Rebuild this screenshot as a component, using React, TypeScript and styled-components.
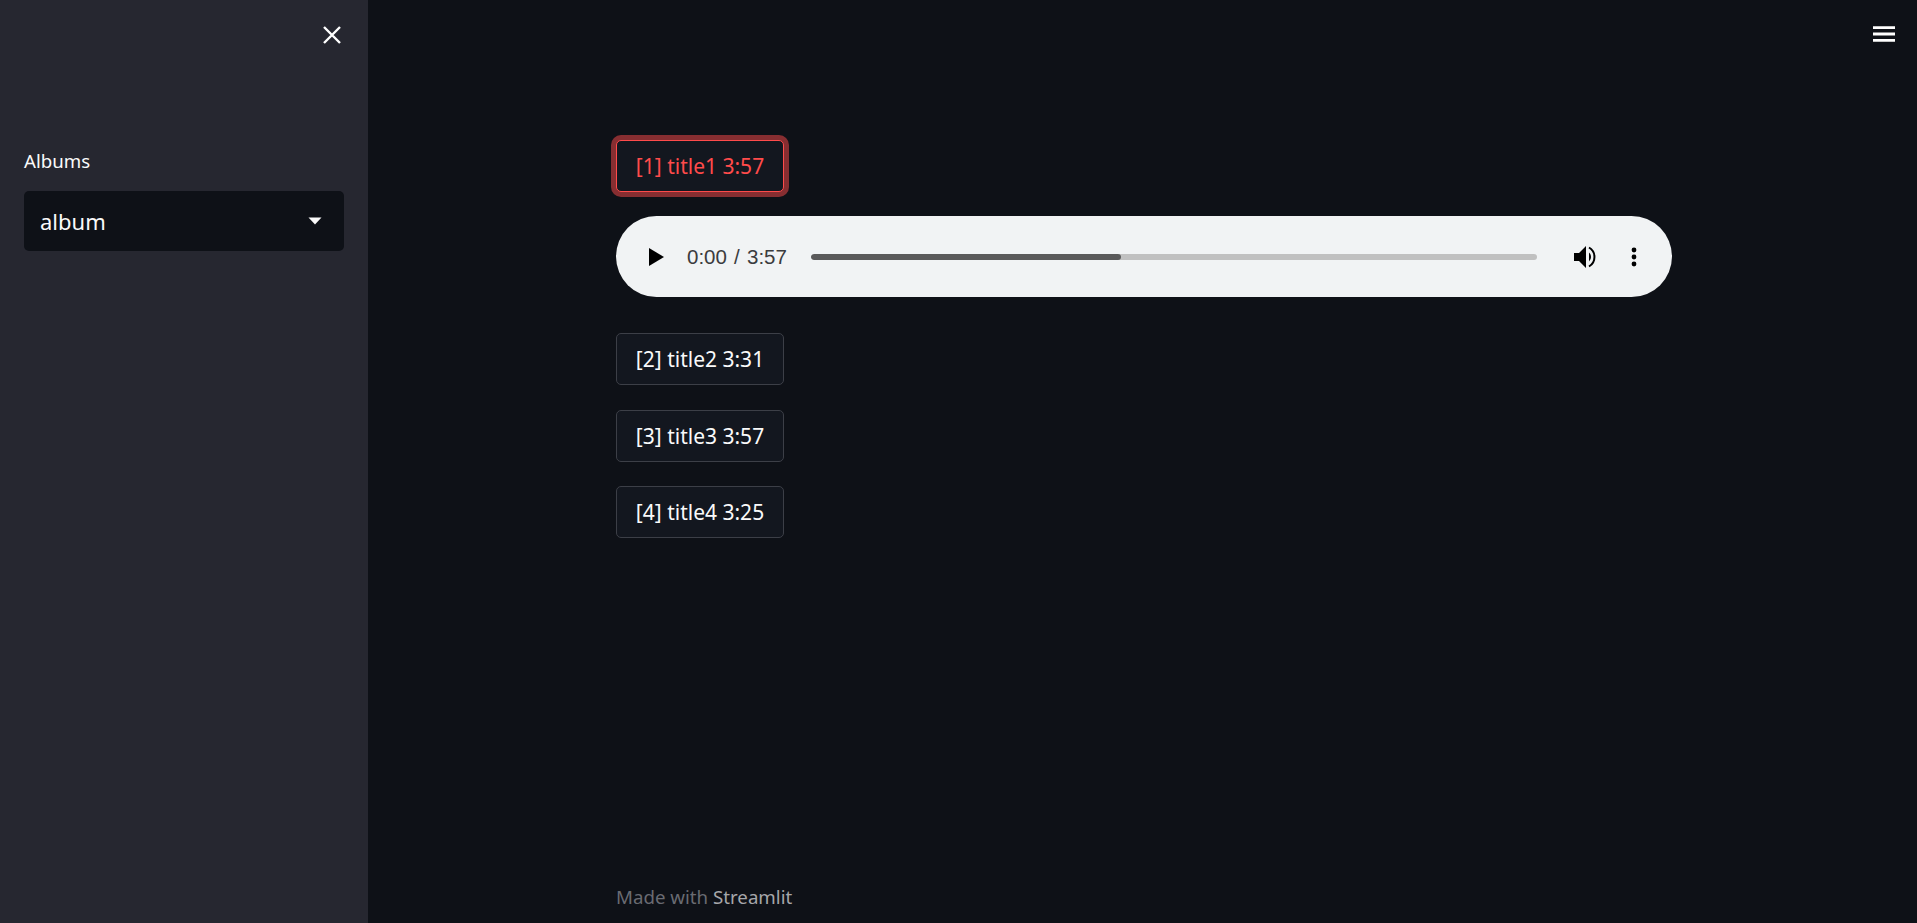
import React from 'react';
import styled, {createGlobalStyle} from 'styled-components';

const GlobalStyle = createGlobalStyle`
  html, body {
    margin: 0;
    height: 100%;
    background: #0e1117;
  }
  #root {
    height: 100%;
  }
`;

const tracks = [
  {id: 1, title: 'title1', time: '3:57', active: true},
  {id: 2, title: 'title2', time: '3:31', active: false},
  {id: 3, title: 'title3', time: '3:57', active: false},
  {id: 4, title: 'title4', time: '3:25', active: false},
];

const Page = styled.div`
  display: flex;
  height: 100vh;
  overflow: hidden;
  font-family: "Noto Sans", "Liberation Sans", sans-serif;
  color: #fafafa;
`;

const Sidebar = styled.aside`
  width: 368px;
  flex: none;
  box-sizing: border-box;
  background: #262730;
  padding: 24px;
  display: flex;
  flex-direction: column;
`;

const CloseRow = styled.div`
  display: flex;
  justify-content: flex-end;
  height: 22px;
`;

const IconBtn = styled.button`
  background: none;
  border: 0;
  padding: 0;
  color: #fff;
  display: block;
  line-height: 0;
`;

const Label = styled.label`
  margin-top: 103px;
  font-size: 18.7px;
  line-height: 24px;
  color: #fafafa;
`;

const Select = styled.div`
  margin-top: 18px;
  height: 60px;
  box-sizing: border-box;
  background: #0e1117;
  border-radius: 5px;
  display: flex;
  align-items: center;
  justify-content: space-between;
  padding: 0 22px 0 16px;
  font-size: 22px;
`;

const Main = styled.main`
  flex: 1;
  position: relative;
  display: flex;
  flex-direction: column;
  padding: 139.5px 245px 0 248px;
`;

const MenuBtn = styled(IconBtn)`
  position: absolute;
  top: 24px;
  right: 22px;
`;

const TrackList = styled.div`
  display: flex;
  flex-direction: column;
  align-items: flex-start;
`;

const TrackBtn = styled.button<{$active?: boolean}>`
  box-sizing: border-box;
  width: 168px;
  height: 52px;
  margin-bottom: 24.5px;
  padding: 0;
  background: #13171f;
  border: 1.5px solid ${p => (p.$active ? '#ff4b4b' : '#3c3f47')};
  border-radius: 5px;
  color: ${p => (p.$active ? '#ff4b4b' : '#fafafa')};
  font-family: inherit;
  font-size: 21px;
  box-shadow: ${p => (p.$active ? '0 0 0 5px rgba(255, 75, 75, 0.5)' : 'none')};
`;

const Player = styled.div`
  height: 81px;
  margin-bottom: 36px;
  width: 100%;
  box-sizing: border-box;
  background: #f1f3f4;
  border-radius: 41px;
  display: flex;
  align-items: center;
  padding: 0 35px 0 33px;
  color: #000;
`;

const Time = styled.span`
  margin-left: 23px;
  font-family: "Liberation Sans", Arial, sans-serif;
  font-size: 20.5px;
  word-spacing: 1.5px;
  color: #3b3c3e;
  white-space: nowrap;
`;

const Track = styled.div`
  flex: 1;
  height: 6px;
  margin: 0 37px 0 24px;
  border-radius: 3px;
  background: #c0c0c0;
  overflow: hidden;
`;

const Played = styled.div`
  height: 100%;
  background: #5a5a5a;
  border-radius: 3px;
`;

const Dots = styled.svg`
  margin-left: 33px;
`;

const Footer = styled.footer`
  margin-top: auto;
  height: 51px;
  font-size: 18.7px;
  line-height: 50px;
  color: #696b72;
`;

const FooterBrand = styled.span`
  color: #a6a7aa;
`;

export default function App() {
  return (
    <Page>
      <GlobalStyle />
      <Sidebar>
        <CloseRow>
          <IconBtn aria-label="Close sidebar">
            <svg width="18" height="18" viewBox="0 0 18 18" style={{marginRight: 3}}>
              <path d="M1 1l16 16M17 1L1 17" stroke="currentColor" strokeWidth="2.4" fill="none" />
            </svg>
          </IconBtn>
        </CloseRow>
        <Label>Albums</Label>
        <Select>
          album
          <svg width="14" height="8" viewBox="0 0 14 8">
            <path d="M0.5 0.5h13L7 7.5z" fill="#fafafa" />
          </svg>
        </Select>
      </Sidebar>
      <Main>
        <MenuBtn aria-label="Menu">
          <svg width="22" height="20" viewBox="0 0 22 20">
            <path d="M0 2.200h22v2.800H0zM0 8.600h22v2.800H0zM0 15h22v2.800H0z" fill="currentColor" />
          </svg>
        </MenuBtn>
        <TrackList>
          {tracks.map(t => (
            <React.Fragment key={t.id}>
              <TrackBtn $active={t.active}>[{t.id}] {t.title} {t.time}</TrackBtn>
              {t.active && (
                <Player>
                  <svg width="15" height="18" viewBox="0 0 15 18">
                    <path d="M0 0l15 9-15 9z" fill="#000" />
                  </svg>
                  <Time>0:00 / 3:57</Time>
                  <Track>
                    <Played style={{width: `${(310 / 726) * 100}%`}} />
                  </Track>
                  <svg width="24" height="24" viewBox="0 0 24 24">
                    <path d="M0 8v8h5l7 7V1L5 8z" fill="#000" />
                    <path d="M15 7.500a6 6 0 0 1 0 9z" fill="#000" />
                    <path d="M15 2.500a11 11 0 0 1 0 19" stroke="#000" strokeWidth="2" fill="none" />
                  </svg>
                  <Dots width="6" height="20" viewBox="0 0 6 20">
                    <circle cx="3" cy="3" r="2.400" />
                    <circle cx="3" cy="10" r="2.400" />
                    <circle cx="3" cy="17" r="2.400" />
                  </Dots>
                </Player>
              )}
            </React.Fragment>
          ))}
        </TrackList>
        <Footer>Made with <FooterBrand>Streamlit</FooterBrand></Footer>
      </Main>
    </Page>
  );
}
